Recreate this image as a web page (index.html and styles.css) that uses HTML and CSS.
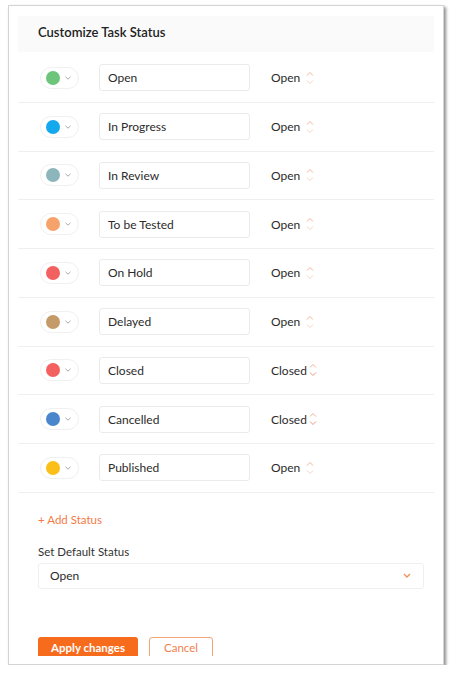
FILE: index.html
```html
<!DOCTYPE html>
<html>
<head>
<meta charset="utf-8">
<link rel="stylesheet" href="styles.css">
</head>
<body>
<div class="card">
  <div class="inner">
    <div class="header">Customize Task Status</div>
    <div class="rows">
      <div class="row">
        <div class="pill"><span class="dot" style="background:#6cc57a"></span><svg class="chev" viewBox="0 0 6 4"><path d="M0.5 0.8 L3 3.2 L5.5 0.8"/></svg></div>
        <div class="input">Open</div>
        <div class="status"><span class="label">Open</span><svg class="updown" viewBox="0 0 8 14"><path d="M1 4.5 L4 1.5 L7 4.5"/><path class="dn" d="M1 9.5 L4 12.5 L7 9.5"/></svg></div>
      </div>
      <div class="row">
        <div class="pill"><span class="dot" style="background:#14a8ec"></span><svg class="chev" viewBox="0 0 6 4"><path d="M0.5 0.8 L3 3.2 L5.5 0.8"/></svg></div>
        <div class="input">In Progress</div>
        <div class="status"><span class="label">Open</span><svg class="updown" viewBox="0 0 8 14"><path d="M1 4.5 L4 1.5 L7 4.5"/><path class="dn" d="M1 9.5 L4 12.5 L7 9.5"/></svg></div>
      </div>
      <div class="row">
        <div class="pill"><span class="dot" style="background:#8db6bc"></span><svg class="chev" viewBox="0 0 6 4"><path d="M0.5 0.8 L3 3.2 L5.5 0.8"/></svg></div>
        <div class="input">In Review</div>
        <div class="status"><span class="label">Open</span><svg class="updown" viewBox="0 0 8 14"><path d="M1 4.5 L4 1.5 L7 4.5"/><path class="dn" d="M1 9.5 L4 12.5 L7 9.5"/></svg></div>
      </div>
      <div class="row">
        <div class="pill"><span class="dot" style="background:#f5a36a"></span><svg class="chev" viewBox="0 0 6 4"><path d="M0.5 0.8 L3 3.2 L5.5 0.8"/></svg></div>
        <div class="input">To be Tested</div>
        <div class="status"><span class="label">Open</span><svg class="updown" viewBox="0 0 8 14"><path d="M1 4.5 L4 1.5 L7 4.5"/><path class="dn" d="M1 9.5 L4 12.5 L7 9.5"/></svg></div>
      </div>
      <div class="row">
        <div class="pill"><span class="dot" style="background:#f2605f"></span><svg class="chev" viewBox="0 0 6 4"><path d="M0.5 0.8 L3 3.2 L5.5 0.8"/></svg></div>
        <div class="input">On Hold</div>
        <div class="status"><span class="label">Open</span><svg class="updown" viewBox="0 0 8 14"><path d="M1 4.5 L4 1.5 L7 4.5"/><path class="dn" d="M1 9.5 L4 12.5 L7 9.5"/></svg></div>
      </div>
      <div class="row">
        <div class="pill"><span class="dot" style="background:#c49a68"></span><svg class="chev" viewBox="0 0 6 4"><path d="M0.5 0.8 L3 3.2 L5.5 0.8"/></svg></div>
        <div class="input">Delayed</div>
        <div class="status"><span class="label">Open</span><svg class="updown" viewBox="0 0 8 14"><path d="M1 4.5 L4 1.5 L7 4.5"/><path class="dn" d="M1 9.5 L4 12.5 L7 9.5"/></svg></div>
      </div>
      <div class="row">
        <div class="pill"><span class="dot" style="background:#f2605f"></span><svg class="chev" viewBox="0 0 6 4"><path d="M0.5 0.8 L3 3.2 L5.5 0.8"/></svg></div>
        <div class="input">Closed</div>
        <div class="status"><span class="label">Closed</span><svg class="updown" viewBox="0 0 8 14"><path d="M1 4.5 L4 1.5 L7 4.5"/><path class="dn strong" d="M1 9.5 L4 12.5 L7 9.5"/></svg></div>
      </div>
      <div class="row">
        <div class="pill"><span class="dot" style="background:#4a86cc"></span><svg class="chev" viewBox="0 0 6 4"><path d="M0.5 0.8 L3 3.2 L5.5 0.8"/></svg></div>
        <div class="input">Cancelled</div>
        <div class="status"><span class="label">Closed</span><svg class="updown" viewBox="0 0 8 14"><path d="M1 4.5 L4 1.5 L7 4.5"/><path class="dn strong" d="M1 9.5 L4 12.5 L7 9.5"/></svg></div>
      </div>
      <div class="row">
        <div class="pill"><span class="dot" style="background:#fbbf1a"></span><svg class="chev" viewBox="0 0 6 4"><path d="M0.5 0.8 L3 3.2 L5.5 0.8"/></svg></div>
        <div class="input">Published</div>
        <div class="status"><span class="label">Open</span><svg class="updown" viewBox="0 0 8 14"><path d="M1 4.5 L4 1.5 L7 4.5"/><path class="dn" d="M1 9.5 L4 12.5 L7 9.5"/></svg></div>
      </div>
    </div>
    <div class="bottom">
      <div class="add">+ Add Status</div>
      <div class="field-label">Set Default Status</div>
      <div class="select"><span>Open</span><svg class="sel-chev" viewBox="0 0 8 5"><path d="M1 1 L4 4 L7 1"/></svg></div>
      <div class="buttons">
        <div class="btn primary">Apply changes</div>
        <div class="btn secondary">Cancel</div>
      </div>
    </div>
  </div>
</div>
</body>
</html>
```
FILE: styles.css
```css
html, body {
  margin: 0;
  padding: 0;
  background: #ffffff;
}
body {
  font-family: "Lato", "Liberation Sans", sans-serif;
  color: #2b2b2b;
}
.card {
  margin: 5px 0 0 8px;
  width: 436px;
  height: 660px;
  box-sizing: border-box;
  border: 1px solid #d4d4d4;
  padding: 10px 9px 8px 9px;
  background: #fff;
  box-shadow: 2px 2px 3px rgba(0, 0, 0, 0.45);
}
.inner {
  height: 100%;
  overflow: hidden;
}
.header {
  height: 36px;
  box-sizing: border-box;
  background: #fafafa;
  padding: 7px 0 0 20px;
  line-height: 18px;
  font-size: 13px;
  font-weight: 600;
  color: #222;
}
.rows {
  margin-top: 2px;
}
.row {
  height: 48.75px;
  box-sizing: border-box;
  border-bottom: 1px solid #efefef;
  display: flex;
  align-items: center;
  padding-left: 22px;
}
.pill {
  width: 39px;
  height: 22px;
  box-sizing: border-box;
  border: 1px solid #f0f0f0;
  border-radius: 11px;
  display: flex;
  align-items: center;
  padding-left: 5px;
}
.dot {
  width: 14px;
  height: 14px;
  border-radius: 50%;
}
.chev {
  width: 6px;
  height: 4px;
  margin-left: 5px;
  fill: none;
  stroke: #aaa;
  stroke-width: 1;
}
.input {
  margin-left: 20px;
  width: 151px;
  height: 27px;
  box-sizing: border-box;
  border: 1px solid #ebebeb;
  border-radius: 3px;
  padding-left: 8px;
  display: flex;
  align-items: center;
  font-size: 12px;
  color: #2b2b2b;
}
.status {
  margin-left: 21px;
  display: flex;
  align-items: center;
  font-size: 12px;
  color: #2b2b2b;
}
.label {
  min-width: 33px;
  margin-right: 2px;
}
.updown {
  width: 8px;
  height: 14px;
  fill: none;
  stroke: #f3b19a;
  stroke-width: 1;
}
.updown .dn {
  stroke: #f7d3c6;
}
.updown .dn.strong {
  stroke: #ee9a80;
}
.bottom {
  padding: 0 10px 0 20px;
}
.add {
  margin-top: 20px;
  line-height: 14px;
  font-size: 11.5px;
  color: #f47a45;
}
.field-label {
  margin-top: 18px;
  line-height: 14px;
  font-size: 11.5px;
  color: #333;
}
.select {
  margin-top: 4px;
  height: 26px;
  box-sizing: border-box;
  border: 1px solid #f0f0f0;
  border-radius: 3px;
  display: flex;
  align-items: center;
  justify-content: space-between;
  padding: 0 12px 0 11px;
  font-size: 12px;
  color: #2b2b2b;
}
.sel-chev {
  width: 8px;
  height: 5px;
  fill: none;
  stroke: #f0905a;
  stroke-width: 1.4;
}
.buttons {
  margin-top: 48px;
  display: flex;
  gap: 11px;
}
.btn {
  height: 22px;
  box-sizing: border-box;
  border-radius: 3px;
  display: flex;
  align-items: center;
  justify-content: center;
  font-size: 11.5px;
}
.btn.primary {
  width: 100px;
  background: #f76b1c;
  color: #fff;
  font-weight: 700;
}
.btn.secondary {
  width: 64px;
  border: 1px solid #f2a477;
  color: #f0804d;
}
```
